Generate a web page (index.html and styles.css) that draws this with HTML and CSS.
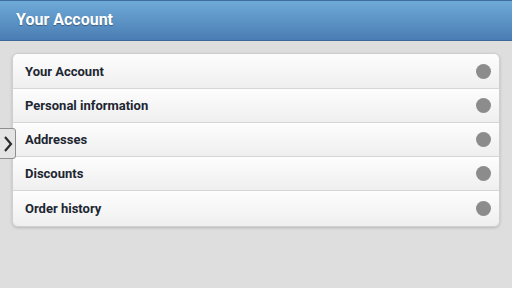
FILE: index.html
```html
<!DOCTYPE html>
<html>
<head>
<meta charset="utf-8">
<link rel="stylesheet" href="styles.css">
</head>
<body>
<header class="bar"><h1 class="title">Your Account</h1></header>
<main class="content">
  <ul class="list">
    <li class="row"><span class="label">Your Account</span><span class="dot"></span></li>
    <li class="row"><span class="label">Personal information</span><span class="dot"></span></li>
    <li class="row"><span class="label">Addresses</span><span class="dot"></span></li>
    <li class="row"><span class="label">Discounts</span><span class="dot"></span></li>
    <li class="row"><span class="label">Order history</span><span class="dot"></span></li>
  </ul>
</main>
<div class="tab"><svg width="10" height="18" viewBox="0 0 10 18"><path d="M2 2 L8 9 L2 16" fill="none" stroke="#2a2a2a" stroke-width="2.2"/></svg></div>
</body>
</html>
```
FILE: styles.css
```css
html, body { margin: 0; padding: 0; }
body {
  width: 512px; height: 288px; overflow: hidden;
  background: #dedede;
  font-family: Roboto, "Liberation Sans", sans-serif;
  position: relative;
}
.bar {
  box-sizing: border-box;
  height: 41px;
  border-top: 1px solid #3f6d9e;
  border-bottom: 1px solid #3d6898;
  background: linear-gradient(#6eaad8, #4a7db3);
  display: flex; align-items: center;
}
.title {
  margin: 0 0 2px 16px;
  font-size: 16px; font-weight: bold; color: #fff;
  text-shadow: 0 1px 1px rgba(0,0,0,0.35);
}
.content { padding: 12px 12px 0 12px; }
.list {
  list-style: none; margin: 0; padding: 0;
  border: 1px solid #cfcfcf; border-radius: 6px;
  box-shadow: 0 1px 3px rgba(0,0,0,0.18);
  overflow: hidden;
  width: 486px;
}
.row {
  height: 34px; box-sizing: border-box;
  display: flex; align-items: center; justify-content: space-between;
  padding: 0 8px 0 12px;
  background: linear-gradient(#fdfdfd, #efefef);
  border-bottom: 1px solid #d6d6d6;
}
.row:first-child { height: 35px; }
.row:last-child { border-bottom: none; height: 35px; }
.label { font-size: 13px; font-weight: bold; color: #1d2631; }
.dot { width: 15px; height: 15px; border-radius: 50%; background: #8c8c8c; }
.tab {
  position: absolute; left: -4px; top: 128px;
  width: 20px; height: 31px; box-sizing: border-box;
  background: #e4e4e4; border: 1px solid #8e8e8e; border-radius: 3px;
  display: flex; align-items: center; justify-content: center; padding-left: 4px;
}
```
